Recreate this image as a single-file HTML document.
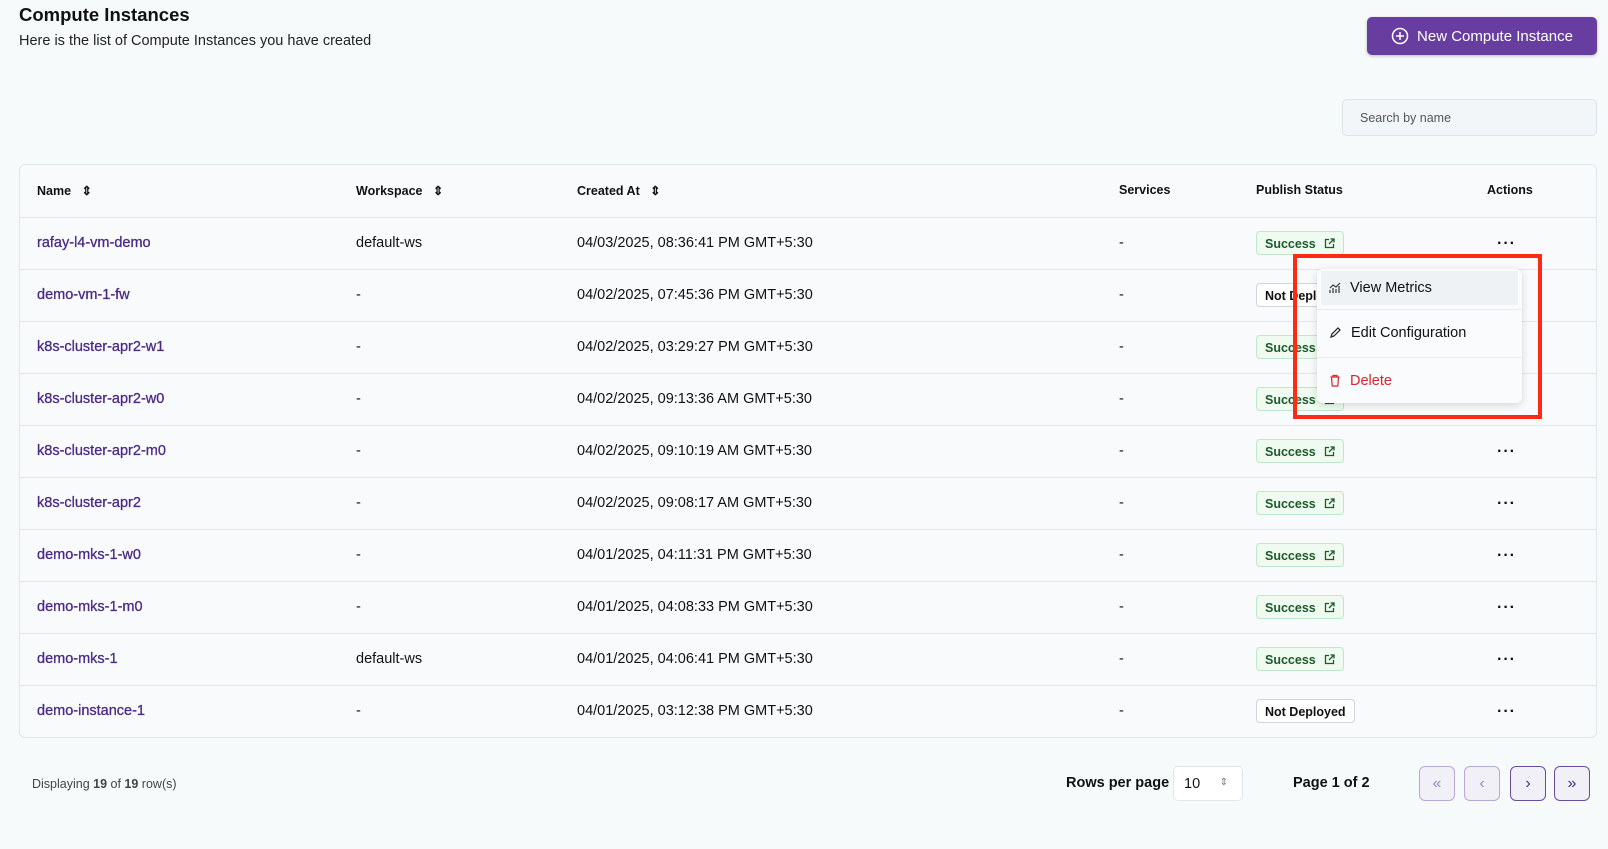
<!DOCTYPE html>
<html><head><meta charset="utf-8"><style>
*{box-sizing:border-box;margin:0;padding:0}
body{width:1608px;height:849px;background:#f7fafb;font-family:"Liberation Sans",Arial,sans-serif;color:#111;position:relative;overflow:hidden}
.abs{position:absolute}
h1{position:absolute;left:19px;top:4px;font-size:18.5px;font-weight:bold;color:#111}
.sub{left:19px;top:33px;font-size:14.5px;color:#222}
.btn{left:1367px;top:17px;width:230px;height:38px;background:#673ea0;border-radius:5px;color:#fff;font-size:15px;display:flex;align-items:center;justify-content:center;gap:8px;box-shadow:0 1px 3px rgba(0,0,0,.25)}
.search{left:1342px;top:99px;width:255px;height:37px;border:1px solid #dde3ea;border-radius:5px;background:#f3f6f8;font-size:12.5px;color:#555;padding:11px 0 0 17px}
.table{left:19px;top:164px;width:1578px;height:574px;border:1px solid #e1e6ec;border-radius:6px;background:#f8fafb}
.row{position:absolute;left:0;width:100%;height:52px;border-top:1px solid #e1e6ec;font-size:14.5px}
.row span{position:absolute;top:17px;white-space:nowrap}
.hdr{border-top:none;font-weight:bold;font-size:12.5px;height:53px}
.hdr span{top:18px}
.name{color:#4b2a86;-webkit-text-stroke:0.3px #4b2a86}
.badge{position:absolute;top:13px!important;height:24px;border-radius:4px;font-size:12.5px;font-weight:bold;padding:5px 8px 0 8px;display:flex;gap:8px}
.badge svg{margin-top:1px}
.ok{background:#effaf0;border:1px solid #bfe6c6;color:#1d5b2a}
.nd{background:#fff;border:1px solid #cfd5db;color:#111}
.dots{font-weight:bold;letter-spacing:1px;top:17px!important;font-size:16px}
.menu{left:1317px;top:269px;width:205px;height:134px;background:#f9fbfc;border-radius:6px;box-shadow:0 2px 8px rgba(0,0,0,.15);font-size:14.5px}
.mi{position:absolute;left:0;width:100%;height:46px;display:flex;align-items:center;padding-left:12px;gap:9px}
.red{left:1293px;top:254px;width:249px;height:165px;border:4px solid #ff2a14}
.pg{position:absolute;top:766px;width:36px;height:35px;border:1.5px solid #b9a7d6;border-radius:6px;background:#f2f0f7;color:#9a88bf;display:flex;align-items:center;justify-content:center}
</style></head><body>
<h1>Compute Instances</h1>
<div class="abs sub">Here is the list of Compute Instances you have created</div>
<div class="abs btn"><svg width="18" height="18" viewBox="0 0 18 18"><circle cx="9" cy="9" r="7.5" fill="none" stroke="#fff" stroke-width="1.5"/><path d="M9 5v8M5 9h8" stroke="#fff" stroke-width="1.5"/></svg>New Compute Instance</div>
<div class="abs search">Search by name</div>
<svg width="0" height="0" style="position:absolute"><symbol id="ext" viewBox="0 0 11 11"><path d="M5 1.5H1.5v8h8V6M6.5 1h3.5v3.5M10 1L5 6" stroke="#1d5b2a" fill="none" stroke-width="1.3"/></symbol></svg>
<div class="abs table">
<div class="row hdr" style="top:0"><span style="left:17px">Name &nbsp;&nbsp;⇕</span><span style="left:336px">Workspace &nbsp;&nbsp;⇕</span><span style="left:557px">Created At &nbsp;&nbsp;⇕</span><span style="left:1099px">Services</span><span style="left:1236px">Publish Status</span><span style="left:1467px">Actions</span></div>
<div class="row" style="top:52px"><span class="name" style="left:17px">rafay-l4-vm-demo</span><span style="left:336px">default-ws</span><span style="left:557px">04/03/2025, 08:36:41 PM GMT+5:30</span><span style="left:1099px">-</span><span class="badge ok" style="left:1236px">Success<svg width="11" height="11"><use href="#ext"/></svg></span><span class="dots" style="left:1477px">···</span></div>
<div class="row" style="top:104px"><span class="name" style="left:17px">demo-vm-1-fw</span><span style="left:336px">-</span><span style="left:557px">04/02/2025, 07:45:36 PM GMT+5:30</span><span style="left:1099px">-</span><span class="badge nd" style="left:1236px">Not Deployed</span></div>
<div class="row" style="top:156px"><span class="name" style="left:17px">k8s-cluster-apr2-w1</span><span style="left:336px">-</span><span style="left:557px">04/02/2025, 03:29:27 PM GMT+5:30</span><span style="left:1099px">-</span><span class="badge ok" style="left:1236px">Success<svg width="11" height="11"><use href="#ext"/></svg></span></div>
<div class="row" style="top:208px"><span class="name" style="left:17px">k8s-cluster-apr2-w0</span><span style="left:336px">-</span><span style="left:557px">04/02/2025, 09:13:36 AM GMT+5:30</span><span style="left:1099px">-</span><span class="badge ok" style="left:1236px">Success<svg width="11" height="11"><use href="#ext"/></svg></span></div>
<div class="row" style="top:260px"><span class="name" style="left:17px">k8s-cluster-apr2-m0</span><span style="left:336px">-</span><span style="left:557px">04/02/2025, 09:10:19 AM GMT+5:30</span><span style="left:1099px">-</span><span class="badge ok" style="left:1236px">Success<svg width="11" height="11"><use href="#ext"/></svg></span><span class="dots" style="left:1477px">···</span></div>
<div class="row" style="top:312px"><span class="name" style="left:17px">k8s-cluster-apr2</span><span style="left:336px">-</span><span style="left:557px">04/02/2025, 09:08:17 AM GMT+5:30</span><span style="left:1099px">-</span><span class="badge ok" style="left:1236px">Success<svg width="11" height="11"><use href="#ext"/></svg></span><span class="dots" style="left:1477px">···</span></div>
<div class="row" style="top:364px"><span class="name" style="left:17px">demo-mks-1-w0</span><span style="left:336px">-</span><span style="left:557px">04/01/2025, 04:11:31 PM GMT+5:30</span><span style="left:1099px">-</span><span class="badge ok" style="left:1236px">Success<svg width="11" height="11"><use href="#ext"/></svg></span><span class="dots" style="left:1477px">···</span></div>
<div class="row" style="top:416px"><span class="name" style="left:17px">demo-mks-1-m0</span><span style="left:336px">-</span><span style="left:557px">04/01/2025, 04:08:33 PM GMT+5:30</span><span style="left:1099px">-</span><span class="badge ok" style="left:1236px">Success<svg width="11" height="11"><use href="#ext"/></svg></span><span class="dots" style="left:1477px">···</span></div>
<div class="row" style="top:468px"><span class="name" style="left:17px">demo-mks-1</span><span style="left:336px">default-ws</span><span style="left:557px">04/01/2025, 04:06:41 PM GMT+5:30</span><span style="left:1099px">-</span><span class="badge ok" style="left:1236px">Success<svg width="11" height="11"><use href="#ext"/></svg></span><span class="dots" style="left:1477px">···</span></div>
<div class="row" style="top:520px"><span class="name" style="left:17px">demo-instance-1</span><span style="left:336px">-</span><span style="left:557px">04/01/2025, 03:12:38 PM GMT+5:30</span><span style="left:1099px">-</span><span class="badge nd" style="left:1236px">Not Deployed</span><span class="dots" style="left:1477px">···</span></div>
</div>
<div class="abs menu">
<div class="mi" style="top:2px;left:4px;width:197px;height:34px;background:#eef2f5;padding-left:8px"><svg width="12" height="12" viewBox="0 0 12 12"><path d="M1 11V8M4 11V6M7 11V7M10 11V4M1 6l3-3 3 2 4-4" stroke="#333" fill="none" stroke-width="1.2"/></svg>View Metrics</div>
<div class="mi" style="top:40px;border-top:1px solid #e8ecef"><svg width="13" height="13" viewBox="0 0 13 13"><path d="M2 11l1-3 6-6 2 2-6 6z" stroke="#222" fill="none" stroke-width="1.2"/></svg>Edit Configuration</div>
<div class="mi" style="top:88px;border-top:1px solid #e8ecef;color:#d9232e"><svg width="12" height="13" viewBox="0 0 12 13"><path d="M1.5 3h9M4 3V1.5h4V3M2.5 3l.7 9h5.6l.7-9" stroke="#d9232e" fill="none" stroke-width="1.2"/></svg>Delete</div>
</div>
<div class="abs red"></div>
<div class="abs" style="left:32px;top:777px;font-size:12.5px;color:#444">Displaying <b>19</b> of <b>19</b> row(s)</div>
<div class="abs" style="left:1066px;top:775px;font-size:14.5px;font-weight:bold">Rows per page</div>
<div class="abs" style="left:1173px;top:766px;width:70px;height:35px;background:#fff;border:1px solid #e1e6ec;border-radius:5px;font-size:14.5px;padding:9px 0 0 10px">10<span style="position:absolute;right:14px;top:10px;font-size:10px;color:#777">⇕</span></div>
<div class="abs" style="left:1293px;top:775px;font-size:14.5px;font-weight:bold">Page 1 of 2</div>
<div class="pg" style="left:1419px">«</div>
<div class="pg" style="left:1464px">‹</div>
<div class="pg" style="left:1510px;border-color:#6a4d99;color:#4b2a86">›</div>
<div class="pg" style="left:1554px;border-color:#6a4d99;color:#4b2a86">»</div>
</body></html>
